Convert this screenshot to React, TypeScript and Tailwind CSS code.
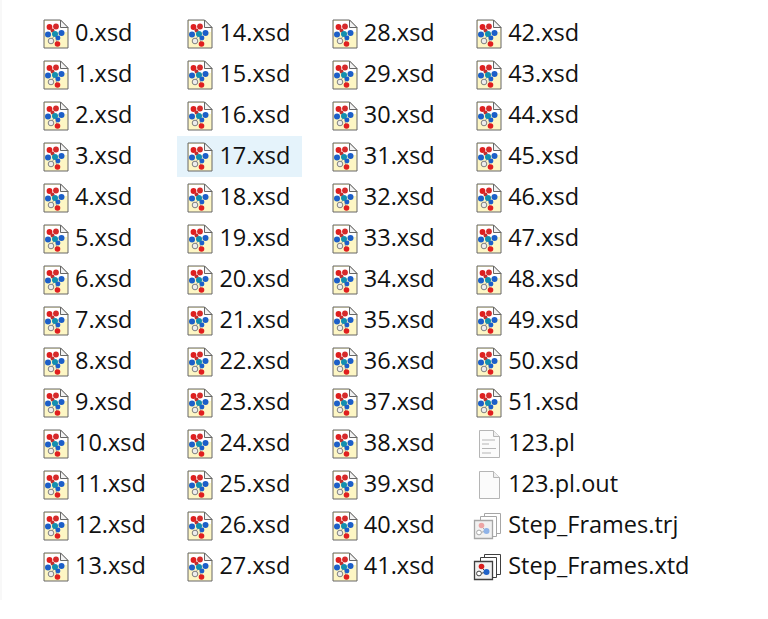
const columns = [
  ["0.xsd", "1.xsd", "2.xsd", "3.xsd", "4.xsd", "5.xsd", "6.xsd", "7.xsd", "8.xsd", "9.xsd", "10.xsd", "11.xsd", "12.xsd", "13.xsd"],
  ["14.xsd", "15.xsd", "16.xsd", "17.xsd", "18.xsd", "19.xsd", "20.xsd", "21.xsd", "22.xsd", "23.xsd", "24.xsd", "25.xsd", "26.xsd", "27.xsd"],
  ["28.xsd", "29.xsd", "30.xsd", "31.xsd", "32.xsd", "33.xsd", "34.xsd", "35.xsd", "36.xsd", "37.xsd", "38.xsd", "39.xsd", "40.xsd", "41.xsd"],
  ["42.xsd", "43.xsd", "44.xsd", "45.xsd", "46.xsd", "47.xsd", "48.xsd", "49.xsd", "50.xsd", "51.xsd", "123.pl", "123.pl.out", "Step_Frames.trj", "Step_Frames.xtd"],
];

function XsdIcon() {
  return (
    <svg width="26" height="30" viewBox="0 0 26 30" className="shrink-0 blur-[0.35px]">
      <path d="M1 1H17.5L25 8.5V29H1Z" fill="#fdf6c4" stroke="#666" />
      <path d="M2 2H17V9H24V13H2Z" fill="#ffffff" />
      <path d="M17.5 1V8.5H25Z" fill="#f3f3f3" stroke="#666" />
      <path d="M8 22L12 15M12 15L14 25" stroke="#a0a0a0" fill="none" />
      <circle cx="6.5" cy="8" r="2.9" fill="#de1f1f" />
      <circle cx="13" cy="7.5" r="2.9" fill="#d62a2a" />
      <circle cx="9.5" cy="11.5" r="2" fill="#c23030" />
      <circle cx="5" cy="15.5" r="3" fill="#1c5fc9" />
      <circle cx="12" cy="15" r="3" fill="#128fb0" />
      <circle cx="18.5" cy="14" r="3" fill="#1c5fc9" />
      <circle cx="15" cy="19" r="2.4" fill="#1c5fc9" />
      <circle cx="8" cy="22" r="2.8" fill="#ededed" stroke="#808080" />
      <circle cx="14.5" cy="25" r="2.8" fill="#e01f1f" />
    </svg>
  );
}

function TextIcon() {
  return (
    <svg width="26" height="30" viewBox="0 0 26 30" className="shrink-0 blur-[0.3px]">
      <path d="M3.5 1.5H17.5L23.5 7.5V28.5H3.5Z" fill="#fbfbfb" stroke="#b5b5b5" />
      <path d="M17.5 1.5V7.5H23.5" fill="#efefef" stroke="#b5b5b5" />
      <path d="M6 11H19M6 15H13M6 19.5H20M6 24H15" stroke="#b5b5b5" strokeWidth="1.2" />
    </svg>
  );
}

function BlankIcon() {
  return (
    <svg width="26" height="30" viewBox="0 0 26 30" className="shrink-0 blur-[0.3px]">
      <path d="M3.5 1.5H17.5L23.5 7.5V28.5H3.5Z" fill="#fbfbfb" stroke="#b5b5b5" />
      <path d="M17.5 1.5V7.5H23.5" fill="#efefef" stroke="#b5b5b5" />
    </svg>
  );
}

function StackIcon({ dark }: { dark?: boolean }) {
  const line = dark ? "#3f3f3f" : "#a6a6a6";
  return (
    <svg width="30" height="28" viewBox="0 0 30 28" className="shrink-0 -ml-[3px] -mr-[1px] blur-[0.35px]">
      <path d="M11.5 1.5H27.5V21.5H11.5Z" fill="#fff" stroke={line} />
      <path d="M7.5 4.5H23.5V24.5H7.5Z" fill="#fff" stroke={line} />
      <path d="M1.5 8.5H19.5V26.5H1.5Z" fill="#f1f1f1" stroke={line} strokeWidth="1.3" />
      <path d="M8 14L13 19L6 21" stroke={line} fill="none" />
      <circle cx="8.5" cy="13.5" r="2.8" fill={dark ? "#d91c1c" : "#eda5a5"} />
      <circle cx="13.5" cy="19" r="3" fill={dark ? "#1f62c8" : "#8fb3e8"} />
      <circle cx="6" cy="20.5" r="2.4" fill="#fff" stroke={line} />
    </svg>
  );
}

function FileIcon({ name }: { name: string }) {
  if (name === "123.pl") return <TextIcon />;
  if (name === "123.pl.out") return <BlankIcon />;
  if (name === "Step_Frames.trj") return <StackIcon />;
  if (name === "Step_Frames.xtd") return <StackIcon dark />;
  return <XsdIcon />;
}

export default function App() {
  return (
    <div className="flex w-[768px] h-[619px] bg-white overflow-hidden font-['Open_Sans',sans-serif]">
      <div className="w-[2px] h-[600px] shrink-0 bg-[#f8f8f8]" />
      <div className="flex gap-[19.4px] pl-[31px] pt-[13px]">
        {columns.map((files, i) => (
          <div key={i} className="flex flex-col w-[125px]">
            {files.map((name) => (
              <div
                key={name}
                className={
                  "flex items-center h-[41px] pl-[10px] gap-[6px] whitespace-nowrap text-[23.5px] text-[#111] " +
                  (name === "17.xsd" ? "bg-[#e5f3fb]" : "")
                }
              >
                <FileIcon name={name} />
                <span className="pb-[1px]">{name}</span>
              </div>
            ))}
          </div>
        ))}
      </div>
    </div>
  );
}
